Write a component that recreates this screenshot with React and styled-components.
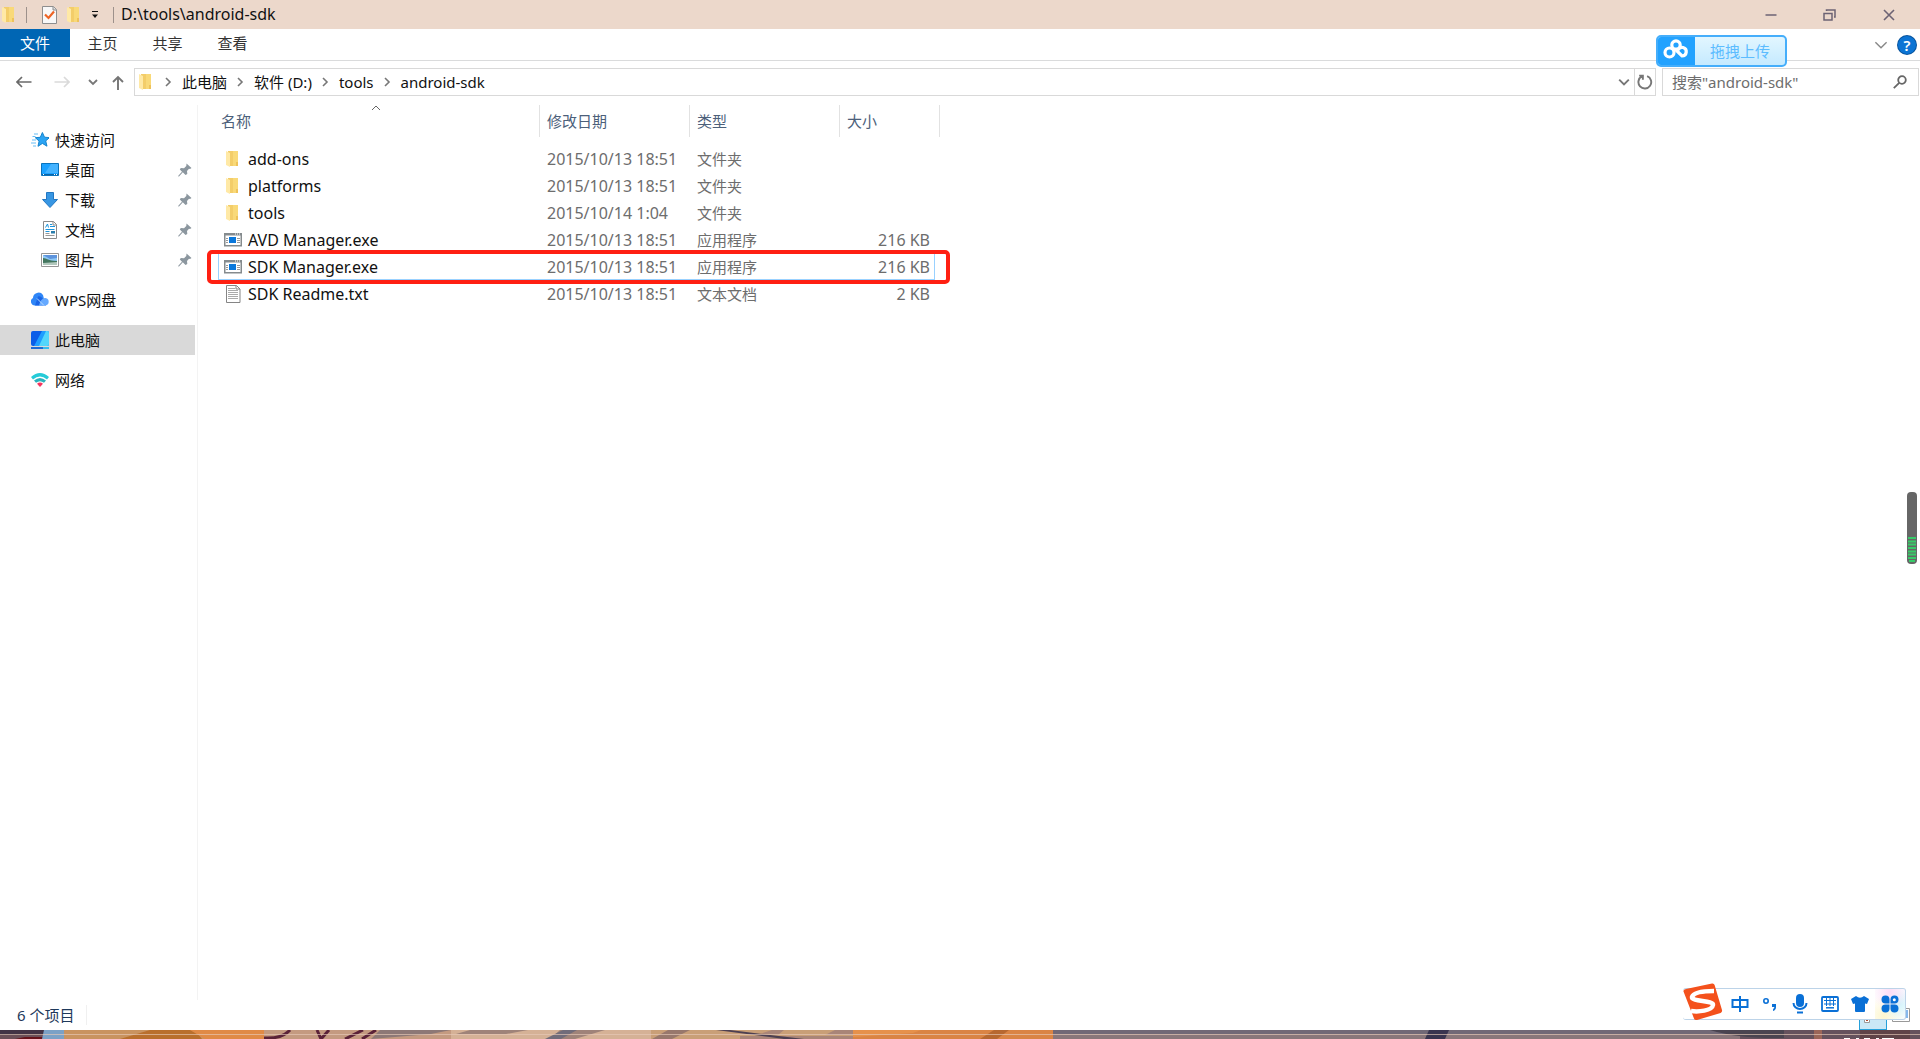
import React, { useState } from "react";
import styled, { createGlobalStyle } from "styled-components";

const places = [
	{ name: "快速访问", icon: "star" },
	{ name: "桌面", icon: "desktop", pinned: true },
	{ name: "下载", icon: "download", pinned: true },
	{ name: "文档", icon: "document", pinned: true },
	{ name: "图片", icon: "picture", pinned: true },
	{ name: "WPS网盘", icon: "cloud", gap: true },
	{ name: "此电脑", icon: "computer", gap: true },
	{ name: "网络", icon: "network", gap: true },
];

const files = [
	{ name: "add-ons", icon: "folder", date: "2015/10/13 18:51", type: "文件夹", size: "" },
	{ name: "platforms", icon: "folder", date: "2015/10/13 18:51", type: "文件夹", size: "" },
	{ name: "tools", icon: "folder", date: "2015/10/14 1:04", type: "文件夹", size: "" },
	{ name: "AVD Manager.exe", icon: "exe", date: "2015/10/13 18:51", type: "应用程序", size: "216 KB" },
	{ name: "SDK Manager.exe", icon: "exe", date: "2015/10/13 18:51", type: "应用程序", size: "216 KB", marked: true },
	{ name: "SDK Readme.txt", icon: "text", date: "2015/10/13 18:51", type: "文本文档", size: "2 KB" },
];

const crumbs = ["此电脑", "软件 (D:)", "tools", "android-sdk"];

const icons = {
	star: (
		<>
			<path d="M11.4 1.5l2.1 4.7 5 .4-3.8 3.3 1.3 5.3-4.6-2.8-4.4 2.9 1.1-5.2L4.300 6.700l5-.4z" fill="#2aa4f4" stroke="#1583cc" strokeWidth="1" />
			<path d="M3 3h4M1.500 5.500h3M1 9h4M0 12h5M2 15h3" stroke="#66bdf5" strokeWidth="1" />
		</>
	),
	desktop: (
		<>
			<path d="M.5 2.500h17v12H.5z" fill="#1ba1ff" stroke="#0a74bd" />
			<path d="M10 3h7v9H4z" fill="#45b3ff" />
			<path d="M1 13.500h16" stroke="#0b63a5" />
			<path d="M2 13.500h1M13 13.500h1M15 13.500h1" stroke="#fff" />
		</>
	),
	download: <path d="M5.500 1.500h7v7h4L9 16.500 1.500 8.500h4z" fill="#3796e3" stroke="#2377c2" />,
	document: (
		<>
			<path d="M2.500.5h10l3 3v14h-13z" fill="#fff" stroke="#8a8a8a" />
			<path d="M12 .5v3.500h3.500" fill="none" stroke="#8a8a8a" />
			<path d="M4.500 6.500L6.500 3l1 3.500M9 3.500h2M9 5.500h5M4.500 8.500h9M4.500 10.500h4" fill="none" stroke="#1b94dc" />
			<path d="M10 10h4v2.500h-4z" fill="#297dac" />
			<path d="M4.500 12.500h4M4.500 14.500h9" stroke="#999" />
		</>
	),
	picture: (
		<>
			<path d="M.5 2.500h17v13H.5z" fill="#fff" stroke="#959595" />
			<path d="M2 4h14v10H2z" fill="#8ec8f5" />
			<path d="M2 4h14v3L9 8z" fill="#5d93dc" />
			<path d="M2 7c4 0 5 3 14 3v4H2z" fill="#43765f" />
			<path d="M2 12l14-1v3H2z" fill="#b2c8bd" />
		</>
	),
	cloud: (
		<>
			<path d="M4 14.500A4 4 0 0 1 2 7a5.500 5.500 0 0 1 10-3l1 4-5 6.500z" fill="#2f86f7" />
			<path d="M7 5.500c4-1 6 4 8 9H4z" fill="#1964e6" />
			<path d="M8 14.500c1-4 3-8 6.500-7.500a3.800 3.800 0 0 1 0 7.500z" fill="#65a9ff" />
			<path d="M6 7.500l7 7" stroke="#b6dbff" strokeWidth="1" />
		</>
	),
	computer: (
		<>
			<rect x="0" y="0" width="18" height="15" rx="2" fill="#0a5de8" />
			<path d="M11 0h5q2 0 2 2v11q0 2-2 2H3z" fill="#1f9dff" />
			<path d="M15 0h1q2 0 2 2v11q0 2-2 2H8z" fill="#53d6fb" />
			<path d="M0 17h13" stroke="#1e6bd6" strokeWidth="2" />
			<path d="M12 17h6" stroke="#37bdef" strokeWidth="2" />
		</>
	),
	network: (
		<>
			<path d="M0 6q9-8 18 0l-2 2.500q-7-6-14 0z" fill="#25cbd8" />
			<path d="M3 9.500q6-5 12 0l-2 2.300q-4-3-8 0z" fill="#2ab2be" />
			<path d="M6 12.800q3-2.500 6 0L9 16z" fill="#f5365f" />
		</>
	),
	folder: (
		<>
			<path d="M4 1h10v15H4z" fill="#f3cd69" />
			<path d="M9 1h5v15H9z" fill="#f9d978" />
			<path d="M2 1l4 2v14l-4-2z" fill="#ffe9a6" />
			<path d="M12 12h2v4h-2z" fill="#eec25a" />
		</>
	),
	exe: (
		<>
			<path d="M.75 2.750h16.500v12H.75z" fill="#fff" stroke="#858b8e" strokeWidth="1.500" />
			<path d="M1 3.500h16" stroke="#858b8e" strokeWidth="2" />
			<path d="M11 3h1M13 3h1M15 3h1" stroke="#fff" />
			<path d="M5 6h7v6H5z" fill="#0a78dc" />
			<path d="M2 7.500h2M2 9.500h2M2 11.500h2M13 7.500h3M13 9.500h3M13 11.500h3" stroke="#999" />
		</>
	),
	text: (
		<>
			<path d="M2.500.5h10l3.500 3.500v13.500H2.500z" fill="#fff" stroke="#858585" />
			<path d="M12 .5V4h4" fill="none" stroke="#858585" />
			<path d="M4 3.500h7M4 5.500h10M4 7.500h10M4 9.500h10M4 11.500h10M4 13.500h10" stroke="#aaa" />
		</>
	),
};

function Glyph({ name }) {
	return (
		<Icon18 viewBox="0 0 18 18" aria-hidden="true">
			{icons[name]}
		</Icon18>
	);
}

function Chevron({ color = "#777", down, size = 10, width = 1.6 }) {
	return (
		<svg width={size} height={size} viewBox="0 0 10 10" fill="none" stroke={color} strokeWidth={width} aria-hidden="true">
			<path d={down ? "M1 3l4 4 4-4" : "M3 1l4 4-4 4"} />
		</svg>
	);
}

function TitleBar() {
	return (
		<StyledTitleBar>
			<div className="quick">
				<Glyph name="folder" />
				<i />
				<button aria-label="属性">
					<svg width="15" height="18" viewBox="0 0 15 18">
						<path d="M.5.5h11l3 3v14H.5z" fill="#f8f8f8" stroke="#8e8e8e" />
						<path d="M11 .5v3.500h3.500" fill="#ddd" stroke="#8e8e8e" />
						<path d="M3 8.500l3.500 3.500L12 5.500" fill="none" stroke="#ed6424" strokeWidth="2.200" />
					</svg>
				</button>
				<button aria-label="新建文件夹">
					<Glyph name="folder" />
				</button>
				<button aria-label="自定义快速访问工具栏">
					<svg width="8" height="8" viewBox="0 0 8 8">
						<path d="M1 .5h6" stroke="#111" />
						<path d="M1 3.500h6L4 7z" fill="#111" />
					</svg>
				</button>
				<i />
			</div>
			<h1>D:\tools\android-sdk</h1>
			<div className="window">
				<button aria-label="最小化">
					<svg width="12" height="12" viewBox="0 0 12 12">
						<path d="M.5 6h11" stroke="#6c6374" strokeWidth="1.500" />
					</svg>
				</button>
				<button aria-label="还原">
					<svg width="13" height="12" viewBox="0 0 13 12" fill="none" stroke="#6c6374" strokeWidth="1.500">
						<path d="M1 4.500h8v6.500H1zM3.500 2V1H12v7h-1" />
					</svg>
				</button>
				<button aria-label="关闭">
					<svg width="12" height="12" viewBox="0 0 12 12" stroke="#6c6374" strokeWidth="1.600">
						<path d="M1 1l10 10M11 1L1 11" />
					</svg>
				</button>
			</div>
		</StyledTitleBar>
	);
}

function AddressBar() {
	const [keyword, setKeyword] = useState("");

	return (
		<StyledAddressBar>
			<div className="arrows">
				<button aria-label="后退">
					<svg width="16" height="12" viewBox="0 0 16 12" fill="none" stroke="#6a6a6a" strokeWidth="1.700">
						<path d="M15.500 6H1.500M6 1L1 6l5 5" />
					</svg>
				</button>
				<button aria-label="前进" disabled>
					<svg width="16" height="12" viewBox="0 0 16 12" fill="none" stroke="#dadada" strokeWidth="1.700">
						<path d="M.5 6h14M10 1l5 5-5 5" />
					</svg>
				</button>
				<button aria-label="最近浏览的位置">
					<Chevron down width={1.8} />
				</button>
				<button aria-label="上移">
					<svg width="12" height="15" viewBox="0 0 12 15" fill="none" stroke="#757575" strokeWidth="1.900">
						<path d="M6 15V2M1 7l5-5 5 5" />
					</svg>
				</button>
			</div>
			<div className="path">
				<Glyph name="folder" />
				{crumbs.map((crumb) => (
					<React.Fragment key={crumb}>
						<Chevron />
						<a href="#path">{crumb}</a>
					</React.Fragment>
				))}
				<button className="previous" aria-label="以前的位置">
					<Chevron down size={12} width={1.6} color="#777" />
				</button>
				<button className="refresh" aria-label="刷新">
					<svg width="16" height="16" viewBox="0 0 15 15" fill="none" stroke="#777" strokeWidth="1.800">
						<path d="M9.500 2a6 6 0 1 1-5 .3M2 1.500h3.500v4" />
					</svg>
				</button>
			</div>
			<form className="search" onSubmit={(e) => e.preventDefault()}>
				<input aria-label="搜索" placeholder={'搜索"android-sdk"'} value={keyword} onChange={(e) => setKeyword(e.target.value)} />
				<button aria-label="开始搜索">
					<svg width="14" height="14" viewBox="0 0 14 14" fill="none" stroke="#666" strokeWidth="1.800">
						<circle cx="9" cy="5" r="3.800" />
						<path d="M6.200 7.800L.8 13.200" />
					</svg>
				</button>
			</form>
		</StyledAddressBar>
	);
}

function FileList() {
	return (
		<StyledFileList>
			<colgroup>
				<col className="name" />
				<col className="date" />
				<col className="type" />
				<col className="size" />
			</colgroup>
			<thead>
				<tr>
					<th>
						<button>名称</button>
						<svg className="sort" width="10" height="6" viewBox="0 0 10 6" fill="none" stroke="#666">
							<path d="M1 5l4-4 4 4" />
						</svg>
					</th>
					<th>
						<button>修改日期</button>
					</th>
					<th>
						<button>类型</button>
					</th>
					<th>
						<button>大小</button>
					</th>
				</tr>
			</thead>
			<tbody>
				{files.map((file) => (
					<tr key={file.name}>
						<td>
							<div className="file">
								<Glyph name={file.icon} />
								{file.name}
							</div>
							{file.marked && (
								<>
									<Selection />
									<Marker />
								</>
							)}
						</td>
						<td>{file.date}</td>
						<td className="kind">{file.type}</td>
						<td>{file.size}</td>
					</tr>
				))}
			</tbody>
		</StyledFileList>
	);
}

function Wallpaper() {
	return (
		<StyledWallpaper viewBox="0 0 1920 9" preserveAspectRatio="none" aria-hidden="true">
			<path d="M0 0h44v9H0z" fill="#423345" />
			<path d="M0 5h44v4H0z" fill="#6b4f58" />
			<path d="M15 9l10-2h18v2z" fill="#68131c" />
			<path d="M44 0h20v9H42z" fill="#7ba1c6" />
			<path d="M64 0h200v9H64z" fill="#c9935f" />
			<path d="M120 9L150 0h45l7 9z" fill="#b96f2c" />
			<path d="M205 9L190 0h74v9z" fill="#e08a46" />
			<path d="M264 0h187v9H264z" fill="#c49a80" />
			<path d="M264 8q18 1 26-8M317 0l4 9 8-9M345 9l18-9M362 9l14-9" stroke="#5b2238" strokeWidth="3" fill="none" />
			<path d="M380 0h71l-20 4-60 5z" fill="#8d7876" />
			<path d="M451 0h200v9H451z" fill="#d5b196" />
			<path d="M470 0h58l-22 4h-50zM560 0h45l-30 9h-25z" fill="#9f8379" />
			<path d="M545 9l18-9h14l-16 9z" fill="#716c7a" />
			<path d="M651 0h202v9H651z" fill="#c99f77" />
			<path d="M652 9l16-9h22l-18 9z" fill="#98786c" />
			<path d="M740 6h113v3H740zM760 4l12-4h12l-6 5zM825 5l10-5h18v5z" fill="#a98578" />
			<path d="M716 0h14l74 9h-20z" fill="#4d4052" />
			<path d="M853 0h200v9H853z" fill="#da8444" />
			<path d="M853 0h68l-8 3-60 4z" fill="#e6914b" />
			<path d="M980 9l14-9h15l-12 9z" fill="#b76830" />
			<path d="M1053 0h687v9h-687z" fill="#89767a" />
			<path d="M1053 0h687v4h-687z" fill="#716876" />
			<path d="M1425 9l4-9h20l-4 9z" fill="#39344f" />
			<path d="M1740 0h180v9h-180z" fill="#65515d" />
			<path d="M1710 0h74v8q-45 1-74-8z" fill="#4a4450" />
			<path d="M1814 0h8v9h-8z" fill="#9b6558" />
			<path d="M1860 0h50v9h-50z" fill="#604347" />
			<path d="M0 4.500h1920" stroke="#e8cbb9" opacity=".65" />
			<path d="M1844 8.500h6M1856 8.500h3M1864 8.500h6M1876 8.500h3M1882 8.500h12" stroke="#fff" />
		</StyledWallpaper>
	);
}

function InputMethodBar() {
	return (
		<StyledInputMethodBar>
			<svg className="logo" width="40" height="38" viewBox="0 0 40 38" aria-hidden="true">
				<path d="M3 6L29 .5q2-.4 2.600 1.600L39 27q.5 2-1.400 3L14 37q-2.500.5-3-1.500L.5 8.500Q0 6.700 3 6z" fill="#f4511c" />
				<path d="M31 8q-20 0-22 6c-1 5 22 3 21 8-1 6-15 7-22 6" fill="none" stroke="#fff" strokeWidth="4.500" />
			</svg>
			<button aria-label="中文">
				<svg width="18" height="18" viewBox="0 0 18 18" fill="none" stroke="#0a70d6" strokeWidth="2">
					<path d="M1.500 5h15v7h-15zM9 1v16" />
				</svg>
			</button>
			<button aria-label="标点">
				<svg width="18" height="18" viewBox="0 0 18 18">
					<circle cx="5" cy="6" r="2.200" fill="none" stroke="#0a70d6" strokeWidth="1.600" />
					<path d="M11 9h4v3q0 3-3 4v-1.500l1.500-2.500H11z" fill="#0a70d6" />
				</svg>
			</button>
			<button aria-label="语音">
				<svg width="18" height="20" viewBox="0 0 18 20" fill="none" stroke="#0a70d6" strokeWidth="2">
					<rect x="6" y="1" width="6" height="11" rx="3" fill="#0a70d6" />
					<path d="M2.500 9a6.500 6 0 0 0 13 0M9 15v1M6 18.500h6" />
				</svg>
			</button>
			<button aria-label="键盘">
				<svg width="18" height="16" viewBox="0 0 18 16" fill="none" stroke="#0a70d6" strokeWidth="1.800">
					<rect x="1" y="1" width="16" height="14" rx="1" />
					<path d="M3 4.500h12M3 8h12M5.500 2v8M9 2v8M12.500 2v8" stroke="#0a70d6" strokeWidth="1" />
					<path d="M5 11.800h8" strokeWidth="1.500" />
				</svg>
			</button>
			<button aria-label="皮肤">
				<svg width="20" height="18" viewBox="0 0 20 18">
					<path d="M6 1q4 3.500 8 0l5 3-2 5-2-.5V16q0 1-1 1H6q-1 0-1-1V8.500L3 9 1 4z" fill="#0a70d6" />
				</svg>
			</button>
			<button aria-label="工具箱" className="tools">
				<svg width="18" height="18" viewBox="0 0 18 18" fill="#0a70d6">
					<path d="M4.500.5A4 4 0 1 0 4.500 8.500h4v-4a4 4 0 0 0-4-4zM.5 13.500a4 4 0 1 0 8 0v-4h-4a4 4 0 0 0-4 4zM9.500 9.500h4a4 4 0 1 1-4 4zM9.500 4.500a4 4 0 1 1 4 4h-4z" />
					<circle cx="13.300" cy="4.700" r="1.500" fill="#fff" />
				</svg>
			</button>
		</StyledInputMethodBar>
	);
}

function App() {
	const [current, setCurrent] = useState("此电脑");

	return (
		<Window>
			<GlobalStyle />
			<TitleBar />
			<Ribbon>
				<Tab $primary>文件</Tab>
				<Tab>主页</Tab>
				<Tab>共享</Tab>
				<Tab>查看</Tab>
				<div className="help">
					<button aria-label="展开功能区">
						<Chevron down size={14} width={1} color="#888" />
					</button>
					<button className="question" aria-label="帮助">
						?
					</button>
				</div>
			</Ribbon>
			<AddressBar />
			<Body>
				<Sidebar>
					{places.map((place) => (
						<Place key={place.name} $gap={place.gap} $pinned={place.pinned} $active={current === place.name} onClick={() => setCurrent(place.name)}>
							<Glyph name={place.icon} />
							<span>{place.name}</span>
							{place.pinned && (
								<svg width="14" height="14" viewBox="0 0 14 14" aria-hidden="true">
									<path d="M8.500.5l5 4.500-1.500 1-1-.3-2 2.300.3 3-1.800 1-2.700-2.800L1 13.500H.3v-.7l3.700-4L1.800 6.500l1-1.500 3.200.3L8.300 3z" fill="#8c979f" />
								</svg>
							)}
						</Place>
					))}
				</Sidebar>
				<FileList />
			</Body>
			<StatusBar>
				<span>6 个项目</span>
				<div className="views">
					<button className="details" aria-label="详细信息">
						<svg width="18" height="12" viewBox="0 0 18 12">
							<path d="M.5.5h5v7h-5z" fill="#fff" stroke="#999" />
							<path d="M2 3h2v3H2z" fill="#b44b32" />
							<path d="M8 2.500h4M13 2.500h5" stroke="#888" />
						</svg>
					</button>
					<button className="large" aria-label="大图标">
						<svg width="18" height="14" viewBox="0 0 18 14">
							<path d="M.5.5h17v13H.5z" fill="#fff" stroke="#999" />
							<path d="M3 2h13v8H3z" fill="#86b9ec" />
						</svg>
					</button>
				</div>
			</StatusBar>
			<Wallpaper />
			<UploadBadge>
				<svg width="37" height="30" viewBox="0 0 37 30" fill="none" stroke="#fff" strokeWidth="3.200" aria-hidden="true">
					<circle cx="18" cy="9" r="4.200" />
					<circle cx="11.500" cy="16.500" r="4.500" />
					<path d="M17 13l7 7a4.300 4.300 0 1 0-4-6" />
				</svg>
				<span>拖拽上传</span>
			</UploadBadge>
			<MemoryMeter viewBox="0 0 10 72" aria-hidden="true">
				<rect width="10" height="72" rx="4" fill="#666" />
				<path d="M1 46h8M1 49.500h8M1 52.500h8M1 56h8M1 59.500h8M1 62.500h8M1 66h8M2 69h6" stroke="#36cb68" strokeWidth="2" />
			</MemoryMeter>
			<InputMethodBar />
		</Window>
	);
}

const GlobalStyle = createGlobalStyle`
	* {
		box-sizing: border-box;
	}
	body {
		margin: 0;
		background-color: #fff;
		font-family: "Noto Sans", "Noto Sans CJK SC", sans-serif;
		font-size: 15px;
		line-height: 20px;
		color: #111;
	}
	button, input {
		margin: 0;
		padding: 0;
		border: none;
		background: none;
		font: inherit;
		color: inherit;
	}
	button {
		display: flex;
		align-items: center;
		justify-content: center;
	}
	svg {
		flex-shrink: 0;
	}
`;

const Icon18 = styled.svg`
	width: 18px;
	height: 18px;
`;

const Window = styled.div`
	position: relative;
	display: flex;
	flex-direction: column;
	height: 100vh;
	overflow: hidden;
`;

const StyledTitleBar = styled.header`
	display: flex;
	align-items: center;
	height: 29px;
	padding-right: 2px;
	background-color: #ecd8cb;
	.quick {
		display: flex;
		align-items: center;
		gap: 8px;
		width: 114px;
		i {
			width: 1px;
			height: 16px;
			background-color: #9d918b;
			&:last-child {
				margin-left: auto;
			}
		}
		button:nth-of-type(1) {
			margin-left: 7px;
		}
	}
	h1 {
		flex: 1;
		margin: 0 0 2px 7px;
		font-size: 16px;
		font-weight: 400;
	}
	.window {
		display: flex;
		button {
			width: 59px;
			height: 28px;
		}
	}
`;

const Ribbon = styled.nav`
	display: flex;
	height: 32px;
	border-bottom: 1px solid #dadbdc;
	.help {
		display: flex;
		align-items: center;
		gap: 10px;
		margin-left: auto;
		padding-right: 4px;
	}
	.question {
		width: 18px;
		height: 18px;
		border-radius: 50%;
		background-color: #0c74d4;
		box-shadow: 0 0 0 1px #07539d;
		color: #fff;
		font-weight: 600;
	}
`;

const Tab = styled.button`
	width: ${(props) => (props.$primary ? "70px" : "65px")};
	height: 28px;
	background-color: ${(props) => (props.$primary ? "#0066b4" : "transparent")};
	color: ${(props) => (props.$primary ? "#fff" : "#333")};
`;

const StyledAddressBar = styled.div`
	display: flex;
	padding: 7px 1px 9px 0;
	.arrows {
		display: flex;
		align-items: center;
		gap: 18px;
		width: 134px;
		padding-left: 16px;
		button:nth-child(2) {
			margin-left: 4px;
		}
		button:nth-child(4) {
			margin-left: -4px;
		}
	}
	.path {
		display: flex;
		flex: 1;
		align-items: center;
		height: 28px;
		padding-left: 2px;
		border: 1px solid #d9d9d9;
		> svg:nth-of-type(n + 2) {
			margin: 0 9px 0 8px;
		}
		a {
			color: inherit;
			text-decoration: none;
		}
		.previous {
			width: 20px;
			margin-left: auto;
		}
		.refresh {
			width: 21px;
			height: 26px;
			border-left: 1px solid #d9d9d9;
		}
	}
	.search {
		display: flex;
		align-items: center;
		width: 257px;
		height: 28px;
		margin-left: 6px;
		padding: 0 11px 0 9px;
		border: 1px solid #d9d9d9;
		input {
			flex: 1;
			min-width: 0;
			outline: none;
			&::placeholder {
				color: #6d6d6d;
				opacity: 1;
			}
		}
	}
`;

const Body = styled.div`
	display: flex;
	flex: 1;
	align-items: flex-start;
	min-height: 0;
`;

const Sidebar = styled.aside`
	align-self: stretch;
	width: 198px;
	padding: 20px 2px 0 0;
	border-right: 1px solid #f3f3f3;
`;

const Place = styled.button`
	justify-content: flex-start;
	gap: 6px;
	width: 100%;
	height: 30px;
	margin-top: ${(props) => (props.$gap ? "10px" : "0")};
	padding: 0 3px 0 ${(props) => (props.$pinned ? "41px" : "31px")};
	background-color: ${(props) => (props.$active ? "#d9d9d9" : "transparent")};
	span {
		flex: 1;
		text-align: left;
	}
`;

const StyledFileList = styled.table`
	width: 722px;
	margin-left: 20px;
	table-layout: fixed;
	border-collapse: collapse;
	.name {
		width: 322px;
	}
	.date,
	.type {
		width: 150px;
	}
	.size {
		width: 100px;
	}
	th {
		position: relative;
		padding: 0 0 8px;
		font-weight: 400;
		button {
			justify-content: flex-start;
			width: 100%;
			height: 32px;
			padding-left: 7px;
			border-right: 1px solid #e2e2e2;
			color: #4c607a;
		}
		&:first-child button {
			padding-left: 3px;
		}
	}
	.sort {
		position: absolute;
		top: 0;
		left: 153px;
	}
	tbody tr {
		position: relative;
		height: 27px;
	}
	td {
		padding: 0 0 0 7px;
		font-size: 16px;
		color: #6d6d6d;
		white-space: nowrap;
		&:first-child {
			padding-left: 6px;
			color: #111;
		}
		&:last-child {
			padding-right: 10px;
			text-align: right;
		}
	}
	.kind {
		font-size: 15px;
	}
	.file {
		display: flex;
		align-items: center;
		gap: 6px;
	}
`;

const Selection = styled.div`
	position: absolute;
	inset: 0 5px 0 0;
	border: 1px solid #99d1ff;
	pointer-events: none;
`;

const Marker = styled.div`
	position: absolute;
	inset: -3px -10px -4px -11px;
	border: 4px solid #ff2012;
	border-radius: 5px;
	pointer-events: none;
`;

const StatusBar = styled.footer`
	display: flex;
	height: 30px;
	color: #1e395b;
	> span {
		height: 20px;
		margin-top: 5px;
		padding: 0 12px 0 17px;
		border-right: 1px solid #f0f0f0;
	}
	.views {
		display: flex;
		gap: 5px;
		margin-left: auto;
		padding-right: 10px;
	}
	.details {
		align-self: flex-end;
		width: 28px;
		height: 18px;
		border: 1px solid #26a0da;
		background-color: #cbe8f6;
	}
	.large {
		width: 18px;
		height: 22px;
		align-items: flex-end;
	}
`;

const StyledWallpaper = styled.svg`
	display: block;
	width: 100%;
	height: 9px;
`;

const UploadBadge = styled.button`
	position: absolute;
	top: 35px;
	right: 133px;
	width: 131px;
	height: 32px;
	overflow: hidden;
	border: 2px solid #45aefb;
	border-radius: 5px;
	background: linear-gradient(#e2f6ff, #c5eaff);
	color: #5cbcff;
	svg {
		background-color: #22a2ff;
	}
	span {
		flex: 1;
	}
`;

const MemoryMeter = styled.svg`
	position: absolute;
	top: 492px;
	right: 3px;
	width: 10px;
	height: 72px;
`;

const StyledInputMethodBar = styled.div`
	position: absolute;
	right: 14px;
	bottom: 19px;
	display: flex;
	align-items: center;
	height: 32px;
	border: 1px solid #bcd3e8;
	border-left: none;
	border-radius: 3px;
	background-color: #fff;
	.logo {
		align-self: flex-end;
		margin-right: 2px;
		margin-bottom: -2px;
	}
	button {
		width: 30px;
		height: 30px;
	}
	.tools {
		background: radial-gradient(circle at 50% 10%, #fbdcf6, transparent 60%), radial-gradient(circle at 80% 50%, #d0f3fb, transparent 60%), radial-gradient(circle at 30% 90%, #fdf6cf, transparent 60%);
	}
`;

export default App;
